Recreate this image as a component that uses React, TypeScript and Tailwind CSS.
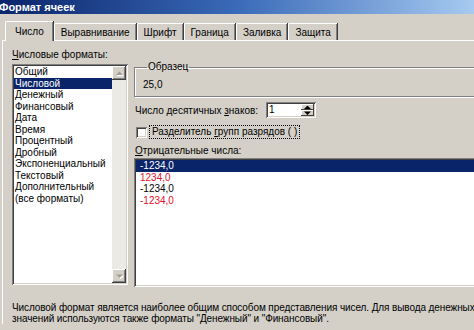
import React from "react";

const formats = [
  "Общий",
  "Числовой",
  "Денежный",
  "Финансовый",
  "Дата",
  "Время",
  "Процентный",
  "Дробный",
  "Экспоненциальный",
  "Текстовый",
  "Дополнительный",
  "(все форматы)",
];

const negatives = [
  { text: "-1234,0", red: false },
  { text: "1234,0", red: true },
  { text: "-1234,0", red: false },
  { text: "-1234,0", red: true },
];

const tabs = ["Выравнивание", "Шрифт", "Граница", "Заливка", "Защита"];

function Arrow({ dir, disabled }: { dir: "up" | "down"; disabled?: boolean }) {
  const pts = dir === "up" ? "0,4 7,4 3.5,0.5" : "0,0.5 7,0.5 3.5,4";
  return (
    <svg width="7" height="5" viewBox="0 0 7 5" className="block">
      {disabled && <polygon points={pts} transform="translate(1,1)" fill="#fff" />}
      <polygon points={pts} fill={disabled ? "#a09c94" : "#000"} />
    </svg>
  );
}

export default function App() {
  return (
    <div className="w-[474px] h-[330px] overflow-hidden bg-[#d4d0c8] text-[10px] text-black font-['Liberation_Sans',Arial,sans-serif]">
      {/* title bar */}
      <div className="h-[14px] bg-[linear-gradient(to_right,#0a246a,#3a6ab8_50%,#a6caf0)] flex items-center -ml-[1px]">
        <span className="text-white font-bold text-[11px] leading-[14px]">Формат ячеек</span>
      </div>

      {/* tabs */}
      <div className="flex items-end h-[19px] mt-[7px] pl-[5px] relative z-10">
        <div className="h-[20px] -mb-[1px] bg-[#d4d0c8] border-l border-t border-white rounded-tl-[2px] shadow-[inset_-1px_0_0_#808080,1px_0_0_#404040] px-[9px] flex items-center">
          Число
        </div>
        {tabs.map((t) => (
          <div
            key={t}
            className="h-[17px] border-l border-t border-white rounded-tl-[2px] shadow-[inset_-1px_0_0_#808080,1px_0_0_#404040] px-[6px] ml-[1px] flex items-center"
          >
            {t}
          </div>
        ))}
      </div>

      {/* panel */}
      <div className="ml-[2px] border-l border-t border-white pl-[9px] pt-[7px]">
        <div className="flex gap-[6px]">
          {/* left column */}
          <div className="w-[116px] shrink-0 flex flex-col">
            <div className="leading-[13px]">
              <span className="underline">Ч</span>исловые форматы:
            </div>
            <div className="mt-[3px] h-[221px] p-[2px] bg-white shadow-[inset_1px_1px_0_#808080,inset_-1px_-1px_0_#fff,inset_2px_2px_0_#404040,inset_-2px_-2px_0_#d4d0c8] flex">
              <div className="flex-1 flex flex-col">
                {formats.map((f, i) => (
                  <div
                    key={f}
                    className={`h-[11.5px] leading-[11.5px] pl-[1px] whitespace-nowrap ${i === 1 ? "bg-[#0a246a] text-white" : ""}`}
                  >
                    {f}
                  </div>
                ))}
              </div>
              <div className="w-[14px] bg-[#eceae5] flex flex-col justify-between">
                <div className="h-[14px] bg-[#d4d0c8] shadow-[inset_-1px_-1px_0_#404040,inset_1px_1px_0_#fff,inset_-2px_-2px_0_#808080] flex items-center justify-center">
                  <Arrow dir="up" disabled />
                </div>
                <div className="h-[14px] bg-[#d4d0c8] shadow-[inset_-1px_-1px_0_#404040,inset_1px_1px_0_#fff,inset_-2px_-2px_0_#808080] flex items-center justify-center">
                  <Arrow dir="down" disabled />
                </div>
              </div>
            </div>
          </div>

          {/* right column */}
          <div className="w-[360px] shrink-0 flex flex-col pt-[13px]">
            <fieldset className="h-[36px] border border-[#808080] shadow-[inset_1px_1px_0_#fff,1px_1px_0_#fff] pl-[8px]">
              <legend className="ml-[4px] px-[1px] leading-[12px]">Образец</legend>
              <div className="leading-[12px] mt-[6px]">25,0</div>
            </fieldset>

            <div className="flex items-center mt-[5px] h-[16px]">
              <div className="w-[132px] pl-[1px] whitespace-nowrap">
                Число десятичных <span className="underline">з</span>наков:
              </div>
              <div className="w-[50px] h-[16px] p-[2px] bg-white shadow-[inset_1px_1px_0_#808080,inset_-1px_-1px_0_#fff,inset_2px_2px_0_#404040,inset_-2px_-2px_0_#d4d0c8] flex">
                <div className="flex-1 leading-[12px] pl-[1px]">1</div>
                <div className="w-[13px] flex flex-col">
                  <div className="h-[6px] bg-[#d4d0c8] shadow-[inset_-1px_-1px_0_#404040,inset_1px_1px_0_#fff] flex items-center justify-center">
                    <Arrow dir="up" />
                  </div>
                  <div className="h-[6px] bg-[#d4d0c8] shadow-[inset_-1px_-1px_0_#404040,inset_1px_1px_0_#fff] flex items-center justify-center">
                    <Arrow dir="down" />
                  </div>
                </div>
              </div>
            </div>

            <div className="flex items-center mt-[7px] h-[14px]">
              <div className="ml-[2px] w-[11px] h-[11px] bg-white shadow-[inset_1px_1px_0_#808080,inset_-1px_-1px_0_#fff,inset_2px_2px_0_#404040,inset_-2px_-2px_0_#d4d0c8]" />
              <div className="ml-[2px] h-[14px] border border-dotted border-black px-[2px] leading-[12px] whitespace-nowrap">
                Разделитель <span className="underline">г</span>рупп разрядов ( )
              </div>
            </div>

            <div className="mt-[6px] leading-[12px] pl-[1px]">
              <span className="underline">О</span>трицательные числа:
            </div>
            <div className="mt-[1px] h-[129px] p-[2px] bg-white shadow-[inset_1px_1px_0_#808080,inset_-1px_-1px_0_#fff,inset_2px_2px_0_#404040,inset_-2px_-2px_0_#d4d0c8]">
              {negatives.map((n, i) => (
                <div
                  key={i}
                  className={`h-[11.5px] leading-[11.5px] pl-[4px] ${i === 0 ? "bg-[#0a246a] text-white" : n.red ? "text-[#e8102a]" : ""}`}
                >
                  {n.text}
                </div>
              ))}
            </div>
          </div>
        </div>

        <div className="mt-[15px] leading-[11px] w-[470px] tracking-[-0.1px]">
          <div className="whitespace-nowrap">
            Числовой формат является наиболее общим способом представления чисел. Для вывода денежных
          </div>
          <div className="whitespace-nowrap">
            значений используются также форматы "Денежный" и "Финансовый".
          </div>
        </div>
      </div>
    </div>
  );
}
